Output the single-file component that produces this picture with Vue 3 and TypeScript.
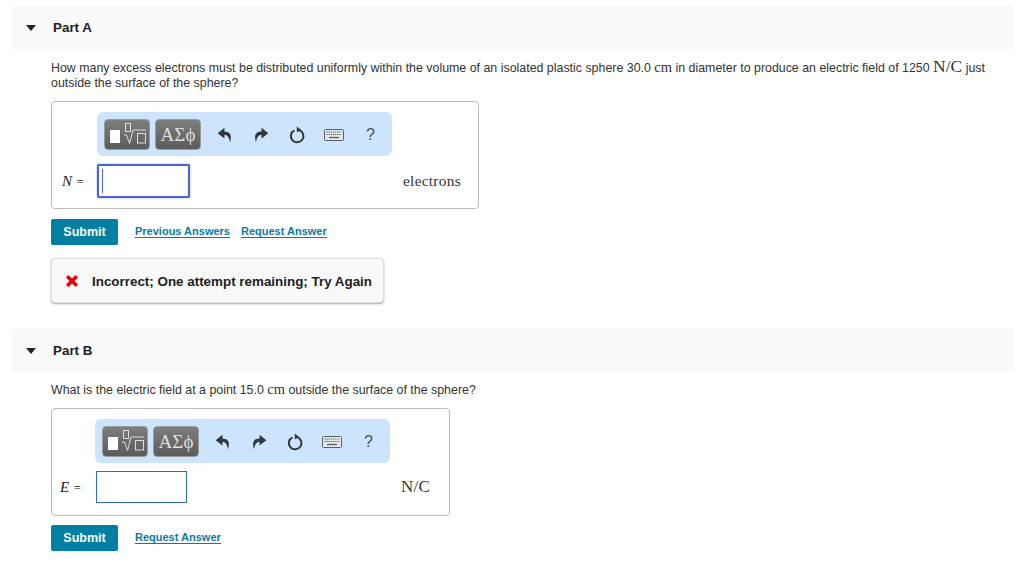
<script setup lang="ts">
interface Part {
  key: string
  title: string
  variable: string
  unit: string
  focused: boolean
}
const partA: Part = { key: 'a', title: 'Part A', variable: 'N', unit: 'electrons', focused: true }
const partB: Part = { key: 'b', title: 'Part B', variable: 'E', unit: 'N/C', focused: false }
const parts: Part[] = [partA, partB]
</script>

<template>
  <main class="page">
    <section v-for="part in parts" :key="part.key" class="part" :class="'part-' + part.key">
      <header class="head">
        <span class="caret"></span>
        <h2>{{ part.title }}</h2>
      </header>

      <p v-if="part.key === 'a'" class="question">
        <span class="line">How many excess electrons must be distributed uniformly within the volume of an isolated plastic sphere 30.0 <span class="si">cm</span> in diameter to produce an electric field of 1250 <span class="si big">N/C</span> just</span>
        <span class="line">outside the surface of the sphere?</span>
      </p>
      <p v-else class="question">
        What is the electric field at a point 15.0 <span class="si">cm</span> outside the surface of the sphere?
      </p>

      <div class="answer">
        <div class="toolbar">
          <button class="tbtn" type="button" aria-label="Templates">
            <svg width="44" height="29" viewBox="0 0 44 29">
              <rect x="5" y="10" width="10" height="13" fill="#fff" />
              <rect x="20.500" y="3.500" width="5" height="8" fill="none" stroke="#ddd" stroke-width="1" />
              <path d="M19 15h2.500l3 8.500 3.500-13.500h13" fill="none" stroke="#ddd" stroke-width="1" />
              <rect x="32.500" y="13.500" width="8" height="9.500" fill="none" stroke="#ddd" stroke-width="1" />
            </svg>
          </button>
          <button class="tbtn greek" type="button">ΑΣϕ</button>
          <div class="tools">
            <svg class="tool" width="18" height="18" viewBox="0 0 16 16"><path d="M7.500 1.500L1.500 6.500 7.500 11V8c2.500 0 4 1.500 5 6.500C14.500 8 12.500 4.800 7.500 4.800z" fill="#33383d" /></svg>
            <svg class="tool" width="18" height="18" viewBox="0 0 16 16"><path d="M8.500 1.500l6 5L8.500 11V8c-2.500 0-4 1.500-5 6.500C1.500 8 3.500 4.800 8.500 4.800z" fill="#33383d" /></svg>
            <svg class="tool" width="18" height="18" viewBox="0 0 18 18"><path d="M6.500 4.300a6.300 6.300 0 1 0 4.500-.3" fill="none" stroke="#33383d" stroke-width="2" /><path d="M8.800 0.500l4.200 3.300-4.200 2.700z" fill="#33383d" /></svg>
            <svg class="tool" width="20" height="12" viewBox="0 0 20 12"><rect x=".5" y=".5" width="19" height="11" rx="1" fill="#e3e8ec" stroke="#5a6066" /><path d="M2.500 3h15M2.500 5.500h15" stroke="#5a6066" stroke-width="1.200" stroke-dasharray="1.300 .8" /><path d="M5 8.500h10" stroke="#5a6066" stroke-width="1.300" /></svg>
            <span class="help">?</span>
          </div>
        </div>
        <div class="entry">
          <span class="var"><i>{{ part.variable }}</i> <span class="eq">=</span></span>
          <span class="field" :class="{ focus: part.focused }"><span v-if="part.focused" class="cursor"></span></span>
          <span class="unit">{{ part.unit }}</span>
        </div>
      </div>

      <div class="actions">
        <button class="submit" type="button">Submit</button>
        <a v-if="part.key === 'a'" class="link" href="#">Previous Answers</a>
        <a class="link" href="#">Request Answer</a>
      </div>

      <div v-if="part.key === 'a'" class="feedback">
        <svg width="14" height="14" viewBox="0 0 14 14"><path d="M2.200 2.200L11.800 11.800M11.800 2.200L2.200 11.800" stroke="#e8000b" stroke-width="3.600" /></svg>
        <span>Incorrect; One attempt remaining; Try Again</span>
      </div>
    </section>
  </main>
</template>

<style>
html, body { background: #fff; }
</style>

<style scoped>
.page {
  width: 1024px;
  height: 570px;
  box-sizing: border-box;
  padding: 6px 10px 0 12px;
  overflow: hidden;
  font-family: "Liberation Sans", Arial, sans-serif;
  color: #333;
}
.part-b { margin-top: 26px; }
.head {
  height: 43px;
  background: #f9f9f9;
  display: flex;
  align-items: center;
  padding-left: 14px;
}
.caret {
  width: 0;
  height: 0;
  border-left: 5.500px solid transparent;
  border-right: 5.500px solid transparent;
  border-top: 6px solid #222;
}
h2 {
  margin: 0 0 0 17px;
  font-size: 13.400px;
  font-weight: 700;
  color: #222;
}
.question {
  margin: 12px 20px 10px 39px;
  font-size: 12.400px;
  line-height: 15px;
  color: #333;
}
.line { display: block; white-space: nowrap; }
.part-b .question { margin-top: 11px; margin-bottom: 10px; }
.si { font-family: "Liberation Serif", serif; font-size: 14.500px; line-height: 0; }
.si.big { font-size: 17.500px; }
.answer {
  margin-left: 39px;
  width: 428px;
  height: 108px;
  box-sizing: border-box;
  border: 1px solid #bbb;
  border-radius: 4px;
  padding: 10px 0 0 45px;
}
.part-b .answer { width: 399px; padding-left: 43px; }
.toolbar {
  width: 295px;
  height: 44px;
  box-sizing: border-box;
  background: #cce5fd;
  border-radius: 6px;
  padding: 7px 0 0 7px;
  display: flex;
  gap: 5px;
}
.tbtn {
  width: 46px;
  height: 31px;
  padding: 0;
  border: 1px solid #9a9a9a;
  border-radius: 4px;
  background: linear-gradient(#7f7d7d, #5c5a5a);
  display: flex;
  align-items: center;
  justify-content: center;
}
.greek {
  font-family: "Liberation Serif", serif;
  font-size: 19px;
  color: #ddd;
}
.tools {
  display: flex;
  align-items: center;
  height: 31px;
}
.tool { flex: none; }
.tools > :nth-child(1) { margin-left: 10px; }
.tools > :nth-child(2) { margin-left: 18px; }
.tools > :nth-child(3) { margin-left: 18px; }
.tools > :nth-child(4) { margin-left: 18px; }
.help {
  margin-left: 22px;
  font-size: 16px;
  color: #4a4f55;
}
.entry {
  display: flex;
  align-items: center;
  margin-top: 8px;
  margin-left: -35px;
  height: 34px;
}
.part-b .entry { height: 32px; }
.var {
  width: 35px;
  font-family: "Liberation Serif", serif;
  font-size: 15px;
  color: #222;
}
.part-b .var { width: 36px; }
.eq { font-size: 12px; margin-left: 1px; }
.field {
  width: 91px;
  height: 32px;
  box-sizing: border-box;
  border: 1px solid #2f6fb5;
  background: #fff;
  display: flex;
  align-items: center;
  padding-left: 3px;
}
.field.focus {
  width: 93px;
  height: 34px;
  border: 2px solid #4a63d8;
  border-radius: 2px;
  box-shadow: 0 0 2px #8fa2ee;
}
.cursor {
  width: 1px;
  height: 24px;
  background: #4a63d8;
}
.unit {
  margin-left: 213px;
  margin-bottom: 1px;
  font-family: "Liberation Serif", serif;
  font-size: 15.300px;
  letter-spacing: .3px;
  color: #333;
}
.part-b .unit { margin-left: 214px; font-size: 17px; margin-bottom: 0; }
.actions {
  display: flex;
  align-items: center;
  margin: 10px 0 0 39px;
  height: 26px;
}
.part-b .actions { margin-top: 9px; }
.submit {
  width: 67px;
  height: 26px;
  border: 0;
  border-radius: 2px;
  padding: 0;
  margin-right: 17px;
  background: #007fa3;
  color: #fff;
  font: 700 12.500px "Liberation Sans", Arial, sans-serif;
}
.link {
  margin-right: 11px;
  margin-bottom: 2px;
  font-size: 11px;
  font-weight: 700;
  color: #0a7aa5;
  text-decoration: none;
  border-bottom: 1px solid #0a7aa5;
  line-height: 12px;
}
.feedback {
  margin: 13px 0 0 39px;
  width: 333px;
  height: 45px;
  box-sizing: border-box;
  border: 1px solid #ddd;
  border-radius: 4px;
  background: #f9f9f9;
  box-shadow: 0 1px 2px #aaa;
  display: flex;
  align-items: center;
  padding: 1px 0 0 13px;
  gap: 13px;
  font-size: 13.400px;
  font-weight: 700;
  color: #222;
}
</style>
